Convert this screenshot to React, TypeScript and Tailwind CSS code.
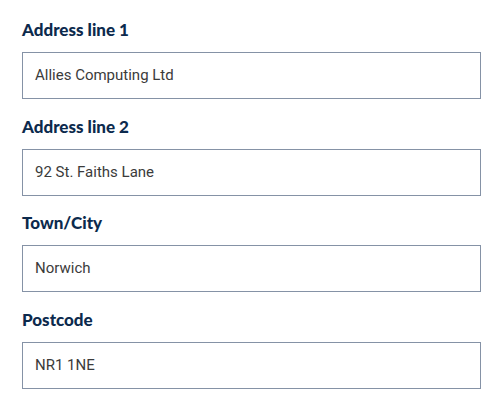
import React from "react";

const fields = [
  { label: "Address line 1", value: "Allies Computing Ltd" },
  { label: "Address line 2", value: "92 St. Faiths Lane" },
  { label: "Town/City", value: "Norwich" },
  { label: "Postcode", value: "NR1 1NE" },
];

export default function App() {
  return (
    <div className="w-[504px] h-[413px] bg-white pl-[22px] pt-[20px] flex flex-col gap-[17.6px]">
      {fields.map((f) => (
        <div key={f.label} className="flex flex-col gap-[12px]">
          <label
            className="text-[17px] leading-[20px] font-black text-[#0c2a4d]"
            style={{ fontFamily: "Lato, 'Liberation Sans', sans-serif" }}
          >
            {f.label}
          </label>
          <div
            className="w-[459px] h-[47px] border border-[#8592a6] flex items-center pl-[12px] text-[15px] text-[#3b3b3b]"
            style={{ fontFamily: "Roboto, 'Liberation Sans', sans-serif" }}
          >
            {f.value}
          </div>
        </div>
      ))}
    </div>
  );
}
